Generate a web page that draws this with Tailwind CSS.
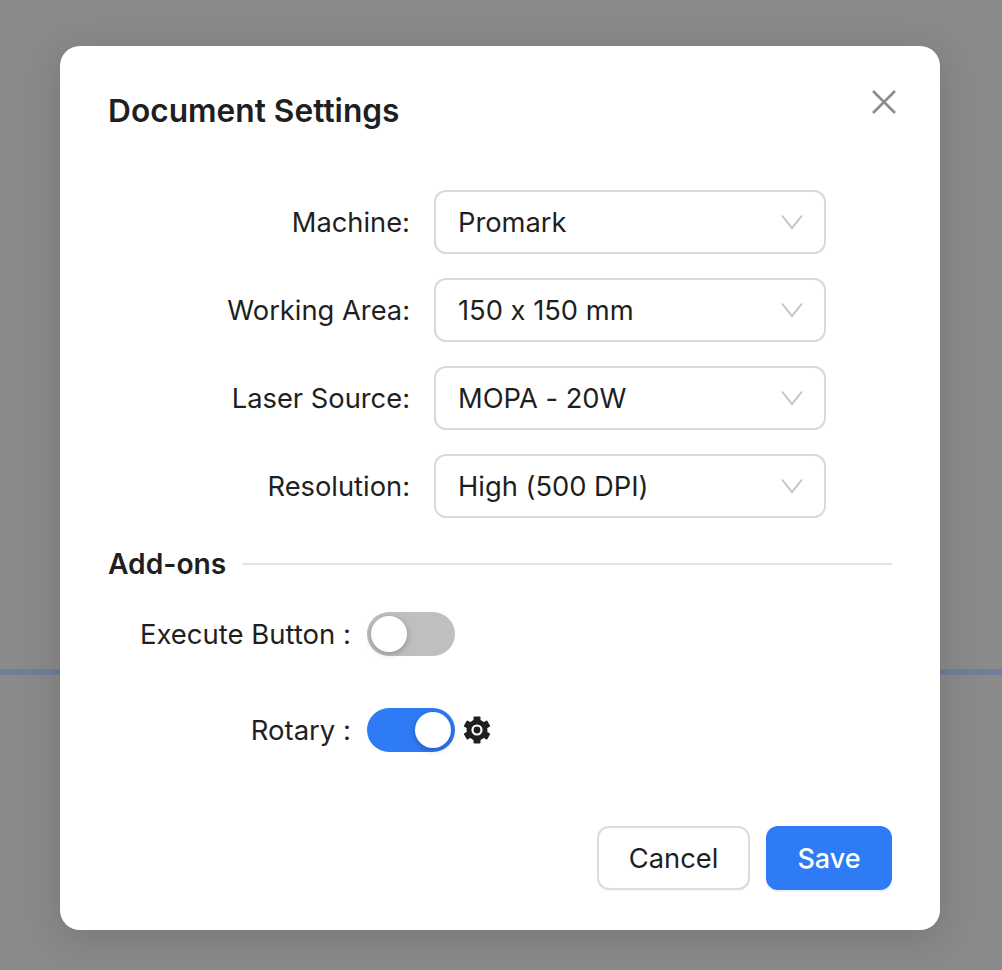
<!DOCTYPE html>
<html lang="en">
<head>
    <meta charset="UTF-8">
    <title>Document Settings</title>
    <script src="https://cdn.jsdelivr.net/npm/@tailwindcss/browser@4"></script>
</head>
<body class="relative h-[970px] w-[1002px] overflow-hidden bg-[#8a8a8a] font-['Inter',sans-serif] text-[#1f1f1f] [font-feature-settings:'calt'_0]">
    <!-- page behind the overlay -->
    <div class="absolute left-0 right-0 top-[669px] h-[6px] bg-[#6f7f9b]"></div>

    <div class="relative ml-[60px] mt-[46px] h-[884px] w-[880px] rounded-[20px] bg-white px-12 pt-12 shadow-[0_8px_40px_rgba(0,0,0,0.15)]">
        <h2 class="text-[31.700px] font-semibold leading-[34px]">Document Settings</h2>
        <button class="absolute right-[42px] top-[42px] text-[#8c8c8c]">
            <svg class="h-[28px] w-[28px]" viewBox="0 0 28 28" fill="none" stroke="currentColor" stroke-width="2.6"><path d="M3 3l22 22M25 3L3 25"/></svg>
        </button>

        <!-- selects -->
        <div class="mt-[62px] flex flex-col gap-6">
            <div class="flex items-center gap-6">
                <label class="w-[302px] pt-[2px] text-right text-[27.300px]">Machine:</label>
                <div class="flex h-16 w-[392px] items-center justify-between rounded-xl border-2 border-[#d9d9d9] pl-[22px] pr-[21px] text-[27.300px]">
                    <span class="pt-[2px]">Promark</span>
                    <svg class="h-[16px] w-[22px] text-[#c4c4c4]" viewBox="0 0 22 16" fill="none" stroke="currentColor" stroke-width="2"><path d="M1 1.5l10 12.5L21 1.500"/></svg>
                </div>
            </div>
            <div class="flex items-center gap-6">
                <label class="w-[302px] pt-[2px] text-right text-[27.300px]">Working Area:</label>
                <div class="flex h-16 w-[392px] items-center justify-between rounded-xl border-2 border-[#d9d9d9] pl-[22px] pr-[21px] text-[27.300px]">
                    <span class="pt-[2px]">150 x 150 mm</span>
                    <svg class="h-[16px] w-[22px] text-[#c4c4c4]" viewBox="0 0 22 16" fill="none" stroke="currentColor" stroke-width="2"><path d="M1 1.5l10 12.5L21 1.500"/></svg>
                </div>
            </div>
            <div class="flex items-center gap-6">
                <label class="w-[302px] pt-[2px] text-right text-[27.300px]">Laser Source:</label>
                <div class="flex h-16 w-[392px] items-center justify-between rounded-xl border-2 border-[#d9d9d9] pl-[22px] pr-[21px] text-[27.300px]">
                    <span class="pt-[2px]">MOPA - 20W</span>
                    <svg class="h-[16px] w-[22px] text-[#c4c4c4]" viewBox="0 0 22 16" fill="none" stroke="currentColor" stroke-width="2"><path d="M1 1.5l10 12.5L21 1.500"/></svg>
                </div>
            </div>
            <div class="flex items-center gap-6">
                <label class="w-[302px] pt-[2px] text-right text-[27.300px]">Resolution:</label>
                <div class="flex h-16 w-[392px] items-center justify-between rounded-xl border-2 border-[#d9d9d9] pl-[22px] pr-[21px] text-[27.300px]">
                    <span class="pt-[2px]">High (500 DPI)</span>
                    <svg class="h-[16px] w-[22px] text-[#c4c4c4]" viewBox="0 0 22 16" fill="none" stroke="currentColor" stroke-width="2"><path d="M1 1.5l10 12.5L21 1.500"/></svg>
                </div>
            </div>
        </div>

        <!-- add-ons -->
        <div class="mt-[29px] flex h-[34px] items-center gap-4">
            <span class="text-[28.200px] font-semibold">Add-ons</span>
            <div class="h-[2px] flex-1 bg-[#e3e3e3]"></div>
        </div>

        <div class="mt-[31px] flex h-11 items-center">
            <label class="w-[243px] pt-[2px] text-right text-[27.500px]">Execute Button :</label>
            <div class="ml-4 flex h-11 w-[88px] items-center rounded-full bg-[#bfbfbf] p-1">
                <div class="h-9 w-9 rounded-full bg-white shadow-[0_2px_6px_rgba(0,0,0,0.25)]"></div>
            </div>
        </div>

        <div class="mt-[52px] flex h-11 items-center">
            <label class="w-[243px] pt-[2px] text-right text-[27.500px]">Rotary :</label>
            <div class="ml-4 flex h-11 w-[88px] items-center justify-end rounded-full bg-[#2f7af5] p-1">
                <div class="h-9 w-9 rounded-full bg-white shadow-[0_2px_6px_rgba(0,0,0,0.25)]"></div>
            </div>
            <svg class="ml-2 h-[28px] w-[28px] text-[#1f1f1f]" viewBox="0 0 28 28">
                <g fill="currentColor">
                    <circle cx="14" cy="14" r="10.500"/>
                    <rect x="10.500" y="0.500" width="7" height="27" rx="1"/>
                    <rect x="10.500" y="0.500" width="7" height="27" rx="1" transform="rotate(60 14 14)"/>
                    <rect x="10.500" y="0.500" width="7" height="27" rx="1" transform="rotate(120 14 14)"/>
                </g>
                <circle cx="14" cy="14" r="4.500" fill="none" stroke="#fff" stroke-width="2.200"/>
            </svg>
        </div>

        <!-- footer -->
        <div class="absolute bottom-10 right-12 flex gap-4">
            <button class="h-16 w-[153px] rounded-xl border-2 border-[#dcdcdc] bg-white pt-[2px] text-[27.300px] shadow-[0_2px_0_rgba(0,0,0,0.02)]">Cancel</button>
            <button class="h-16 w-[126px] rounded-xl bg-[#2f7af5] pt-[2px] text-[27px] font-medium text-white shadow-[0_2px_0_rgba(47,122,245,0.1)]">Save</button>
        </div>
    </div>
</body>
</html>
